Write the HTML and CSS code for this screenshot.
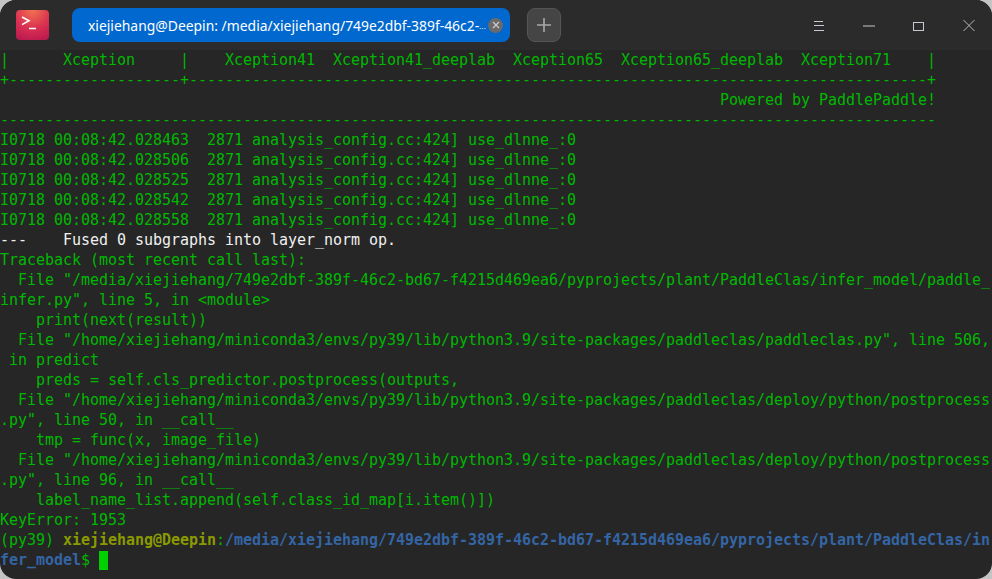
FILE: index.html
```html
<!DOCTYPE html>
<html lang="en">
<head>
    <meta charset="UTF-8">
    <title>xiejiehang@Deepin</title>
    <link rel="stylesheet" href="styles.css">
</head>
<body>
    <div class="window">
        <div class="titlebar">
            <div class="app-icon">
                <svg width="33" height="30" viewBox="0 0 33 30">
                    <path d="M6 7 L13 10.8 L6 14.6" fill="none" stroke="#fff" stroke-width="1.6"/>
                    <path d="M13 18.5 H20" stroke="#fff" stroke-width="1.6"/>
                </svg>
            </div>
            <div class="tab">
                <span class="tab-title">xiejiehang@Deepin: /media/xiejiehang/749e2dbf-389f-46c2-<span class="dots">⋯</span></span>
                <span class="tab-close">
                    <svg width="8" height="8" viewBox="0 0 8 8"><path d="M1 1 L7 7 M7 1 L1 7" stroke="#ccc" stroke-width="1.2"/></svg>
                </span>
            </div>
            <div class="add-tab">
                <svg width="18" height="18" viewBox="0 0 18 18"><path d="M9 2 V16 M2 9 H16" stroke="#a8a8a8" stroke-width="1.6"/></svg>
            </div>
            <div class="win-buttons">
                <svg width="12" height="12" viewBox="0 0 12 12"><path d="M1 2.5 H10 M1 6.5 H11 M1 11.5 H11" stroke="#c8c8d0" stroke-width="1"/></svg>
                <svg width="12" height="12" viewBox="0 0 12 12"><path d="M0 7 H12" stroke="#c8c8d0" stroke-width="1"/></svg>
                <svg width="12" height="12" viewBox="0 0 12 12"><rect x="0.5" y="3.5" width="10" height="8" fill="none" stroke="#c8c8d0" stroke-width="1"/></svg>
                <svg width="12" height="12" viewBox="0 0 12 12"><path d="M0.5 1 L11.5 12 M11.5 1 L0.5 12" stroke="#c8c8d0" stroke-width="0.9"/></svg>
            </div>
        </div>
        <div class="terminal">
            <div class="line">|      Xception     |    Xception41  Xception41_deeplab  Xception65  Xception65_deeplab  Xception71    |</div>
            <div class="line">+-------------------+----------------------------------------------------------------------------------+</div>
            <div class="line">                                                                                Powered by PaddlePaddle!</div>
            <div class="line">--------------------------------------------------------------------------------------------------------</div>
            <div class="line">I0718 00:08:42.028463  2871 analysis_config.cc:424] use_dlnne_:0</div>
            <div class="line">I0718 00:08:42.028506  2871 analysis_config.cc:424] use_dlnne_:0</div>
            <div class="line">I0718 00:08:42.028525  2871 analysis_config.cc:424] use_dlnne_:0</div>
            <div class="line">I0718 00:08:42.028542  2871 analysis_config.cc:424] use_dlnne_:0</div>
            <div class="line">I0718 00:08:42.028558  2871 analysis_config.cc:424] use_dlnne_:0</div>
            <div class="line white">---    Fused 0 subgraphs into layer_norm op.</div>
            <div class="line">Traceback (most recent call last):</div>
            <div class="line">  File "/media/xiejiehang/749e2dbf-389f-46c2-bd67-f4215d469ea6/pyprojects/plant/PaddleClas/infer_model/paddle_</div>
            <div class="line">infer.py", line 5, in &lt;module&gt;</div>
            <div class="line">    print(next(result))</div>
            <div class="line">  File "/home/xiejiehang/miniconda3/envs/py39/lib/python3.9/site-packages/paddleclas/paddleclas.py", line 506,</div>
            <div class="line"> in predict</div>
            <div class="line">    preds = self.cls_predictor.postprocess(outputs,</div>
            <div class="line">  File "/home/xiejiehang/miniconda3/envs/py39/lib/python3.9/site-packages/paddleclas/deploy/python/postprocess</div>
            <div class="line">.py", line 50, in __call__</div>
            <div class="line">    tmp = func(x, image_file)</div>
            <div class="line">  File "/home/xiejiehang/miniconda3/envs/py39/lib/python3.9/site-packages/paddleclas/deploy/python/postprocess</div>
            <div class="line">.py", line 96, in __call__</div>
            <div class="line">    label_name_list.append(self.class_id_map[i.item()])</div>
            <div class="line">KeyError: 1953</div>
            <div class="line">(py39) <b class="user">xiejiehang@Deepin</b>:<b class="path">/media/xiejiehang/749e2dbf-389f-46c2-bd67-f4215d469ea6/pyprojects/plant/PaddleClas/in</b></div>
            <div class="line"><b class="path">fer_model</b>$ <span class="cursor"></span></div>
        </div>
    </div>
</body>
</html>
```

FILE: styles.css
```css
html, body {
    margin: 0;
    height: 100%;
    background-color: #c4c4c4;
    overflow: hidden;
}
.window {
    height: 579px;
    background-color: #262626;
    border-radius: 16px;
    overflow: hidden;
}
.titlebar {
    display: flex;
    align-items: center;
    height: 50px;
    background-color: #2b2b2b;
    box-sizing: border-box;
}
.app-icon {
    width: 33px;
    height: 30px;
    margin-left: 16px;
    border-radius: 4px;
    background: radial-gradient(circle at 50% 0, #f2734f 0, #d92f52 55%, #b5164f 100%);
    display: flex;
}
.tab {
    display: flex;
    align-items: center;
    justify-content: space-between;
    width: 438px;
    height: 34px;
    margin-left: 23px;
    box-sizing: border-box;
    padding: 0 7px 0 16px;
    background-color: #0068ce;
    border-radius: 8px;
    color: #fff;
    font: 13.9px "Noto Sans", sans-serif;
}
.tab-title {
    white-space: nowrap;
}
.dots {
    font-size: 7px;
}
.tab-close {
    display: flex;
    flex: none;
    align-items: center;
    justify-content: center;
    width: 15px;
    height: 15px;
    border-radius: 50%;
    background-color: #6a6a6a;
}
.add-tab {
    display: flex;
    align-items: center;
    justify-content: center;
    width: 34px;
    height: 34px;
    margin-left: 17px;
    box-sizing: border-box;
    background-color: #454545;
    border: 1px solid #555;
    border-radius: 8px;
}
.win-buttons {
    display: flex;
    gap: 38px;
    margin-left: auto;
    margin-right: 17px;
}
.terminal {
    height: 529px;
    overflow: hidden;
    color: #00b800;
    font: 15px/20px "DejaVu Sans Mono", monospace;
    letter-spacing: -0.03px;
}
.line {
    height: 20px;
    white-space: pre;
}
.white {
    color: #f0f0f0;
}
.user {
    color: #8a9a00;
}
.path {
    color: #3465a4;
}
.cursor {
    display: inline-block;
    width: 9px;
    height: 19px;
    vertical-align: -5px;
    background-color: #00d000;
}
```
